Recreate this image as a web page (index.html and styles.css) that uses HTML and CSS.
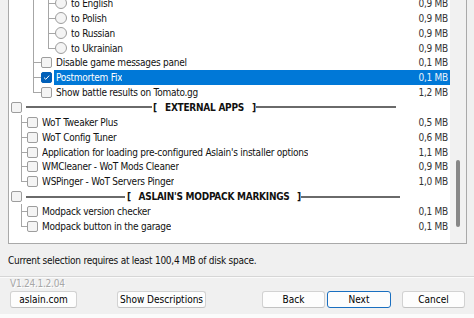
FILE: index.html
```html
<!DOCTYPE html>
<html lang="en">
  <head>
    <meta charset="UTF-8" />
    <title>Select Components</title>
    <link rel="stylesheet" href="styles.css">
  </head>
  <body>
    <div class="list">
      <div class="rows">
        <div class="rows-inner">
          <div class="row"><span class="sp w24"></span><span class="vl w15"></span><span class="el w7"></span><span class="radio"></span><span class="item"><span>to English</span><span class="size">0,9 MB</span></span></div>
          <div class="row"><span class="sp w24"></span><span class="vl w15"></span><span class="el w7"></span><span class="radio"></span><span class="item"><span>to Polish</span><span class="size">0,9 MB</span></span></div>
          <div class="row"><span class="sp w24"></span><span class="vl w15"></span><span class="el w7"></span><span class="radio"></span><span class="item"><span>to Russian</span><span class="size">0,9 MB</span></span></div>
          <div class="row"><span class="sp w24"></span><span class="vl w15"></span><span class="el last w7"></span><span class="radio"></span><span class="item"><span>to Ukrainian</span><span class="size">0,9 MB</span></span></div>
          <div class="row"><span class="sp w24"></span><span class="el w8"></span><span class="check"></span><span class="item"><span>Disable game messages panel</span><span class="size">0,1 MB</span></span></div>
          <div class="row"><span class="sp w24"></span><span class="el w8"></span><span class="check on"><svg viewBox="0 0 11 11" width="11" height="11"><path d="M3 5.6 L4.8 7.3 L8.2 3.6" fill="none" stroke="#fff" stroke-width="1"/></svg></span><span class="item selected"><span>Postmortem Fix</span><span class="size">0,1 MB</span></span></div>
          <div class="row"><span class="sp w24"></span><span class="el last w8"></span><span class="check"></span><span class="item"><span>Show battle results on Tomato.gg</span><span class="size">1,2 MB</span></span></div>

          <div class="row"><span class="sp w2"></span><span class="check"></span>
            <div class="hdr ext"><span class="hl left"></span><b>[</b><b class="ht">EXTERNAL APPS</b><b>]</b><span class="hl right"></span></div>
          </div>
          <div class="row"><span class="sp w12"></span><span class="el w6"></span><span class="check"></span><span class="item"><span>WoT Tweaker Plus</span><span class="size">0,5 MB</span></span></div>
          <div class="row"><span class="sp w12"></span><span class="el w6"></span><span class="check"></span><span class="item"><span>WoT Config Tuner</span><span class="size">0,6 MB</span></span></div>
          <div class="row"><span class="sp w12"></span><span class="el w6"></span><span class="check"></span><span class="item"><span>Application for loading pre-configured Aslain's installer options</span><span class="size">1,1 MB</span></span></div>
          <div class="row"><span class="sp w12"></span><span class="el w6"></span><span class="check"></span><span class="item"><span>WMCleaner - WoT Mods Cleaner</span><span class="size">0,9 MB</span></span></div>
          <div class="row"><span class="sp w12"></span><span class="el last w6"></span><span class="check"></span><span class="item"><span>WSPinger - WoT Servers Pinger</span><span class="size">1,0 MB</span></span></div>

          <div class="row"><span class="sp w2"></span><span class="check"></span>
            <div class="hdr mark"><span class="hl left"></span><b>[</b><b class="ht">ASLAIN'S MODPACK MARKINGS</b><b>]</b><span class="hl right"></span></div>
          </div>
          <div class="row"><span class="sp w12"></span><span class="el w6"></span><span class="check"></span><span class="item"><span>Modpack version checker</span><span class="size">0,1 MB</span></span></div>
          <div class="row"><span class="sp w12"></span><span class="el last w6"></span><span class="check"></span><span class="item"><span>Modpack button in the garage</span><span class="size">0,1 MB</span></span></div>
        </div>
      </div>
      <div class="scrollbar"><div class="thumb"></div></div>
    </div>

    <p class="req">Current selection requires at least 100,4 MB of disk space.</p>

    <div class="bottom">
      <div class="ver">V1.24.1.2.04</div>
      <div class="buttons">
        <div class="group">
          <button class="btn site">aslain.com</button>
          <button class="btn desc">Show Descriptions</button>
        </div>
        <div class="group nav">
          <button class="btn">Back</button>
          <button class="btn primary">Next</button>
          <button class="btn cancel">Cancel</button>
        </div>
      </div>
    </div>
  </body>
</html>
```

FILE: styles.css
```css
/* Base */
* {
  box-sizing: border-box;
}
html {
  background: #fbfbfb;
}
body {
  margin: 0;
  height: 314px;
  overflow: hidden;
  background: #f0f0f0;
  color: #111;
  font-family: "DejaVu Sans Condensed", "DejaVu Sans", sans-serif;
  font-stretch: condensed;
  font-size: 10px;
  letter-spacing: -0.25px;
}

/* Component list */
.list {
  display: flex;
  height: 244px;
  margin: 0 7px 0 8px;
  background: #fff;
  border: 1px solid #a9a9a9;
  border-top: none;
}
.rows {
  flex: 1;
  overflow: hidden;
}
.rows-inner {
  margin-top: -4px;
}
.row {
  display: flex;
  height: 14.86px;
  white-space: nowrap;
}
.sp,
.vl,
.el {
  flex: none;
}
.w2 { width: 2px; }
.w6 { width: 6px; }
.w7 { width: 7px; }
.w8 { width: 8px; }
.w12 { width: 12px; }
.w15 { width: 15px; }
.w24 { width: 24px; }

/* tree guides */
.vl {
  background: linear-gradient(#a6a6a6, #a6a6a6) 0 0 / 1px 100% no-repeat;
}
.el {
  background:
    linear-gradient(#a6a6a6, #a6a6a6) 0 0 / 1px 100% no-repeat,
    linear-gradient(#a6a6a6, #a6a6a6) 0 50% / 100% 1px no-repeat;
}
.el.last {
  background-size: 1px 50%, 100% 1px;
}

/* controls */
.check,
.radio {
  flex: none;
  align-self: center;
  width: 11px;
  height: 11px;
  background: #f4f4f4;
  border: 1px solid #9d9d9d;
  border-radius: 2px;
}
.radio {
  width: 12px;
  height: 12px;
  border-radius: 50%;
}
.check.on {
  background: #005fb8;
  border-color: #005fb8;
}
.check svg {
  display: block;
  margin: -1px 0 0 -1px;
}

.item {
  flex: 1;
  display: flex;
  justify-content: space-between;
  align-items: center;
  min-width: 0;
  margin-left: 2px;
  padding: 0 2px;
}
.item > span:first-child {
  overflow: hidden;
}
.size {
  flex: none;
  padding-left: 8px;
  color: #333;
}
.item.selected {
  background: #0078d7;
  color: #fff;
}
.item.selected .size {
  color: #e8f2fb;
}

/* section headers */
.hdr {
  display: flex;
  align-items: center;
  margin-left: 4px;
  font-weight: bold;
}
.hl {
  height: 2px;
  background: #6a6a6a;
}
.hdr b {
  width: 4px;
}
.hdr .ht {
  text-align: center;
}
.ext .left { width: 126px; margin-right: 1px; }
.ext .ht { width: 95px; }
.ext .right { width: 140px; }
.mark .left { width: 99px; margin-right: 2px; }
.mark .ht { width: 166px; }
.mark .right { width: 99px; }

.scrollbar {
  flex: none;
  width: 16px;
  background: #f1f1f1;
  display: flex;
  justify-content: center;
}
.thumb {
  width: 4px;
  height: 67px;
  margin-top: 160px;
  background: #878787;
  border-radius: 2px;
}

/* Footer */
.req {
  margin: 10px 0 8px 8px;
  line-height: 14px;
}
.bottom {
  border-top: 1px solid #d6d6d6;
  box-shadow: inset 0 1px #fbfbfb;
}
.ver {
  margin: 2px 0 0 10px;
  line-height: 10px;
  color: #a7a7a7;
  text-shadow: 1px 1px #fff;
}
.buttons {
  display: flex;
  justify-content: space-between;
  margin: 2px 9px 0 10px;
}
.group {
  display: flex;
  gap: 40px;
}
.nav {
  gap: 2px;
}
.btn {
  height: 17px;
  width: 63px;
  padding: 0;
  font: inherit;
  color: #000;
  background: #fdfdfd;
  border: 1px solid #d2d2d2;
  border-bottom-color: #c2c2c2;
  border-radius: 3px;
}
.btn.site { width: 67px; }
.btn.desc { width: 89px; }
.btn.primary {
  width: 64px;
  border-color: #1a6fc0;
}
.btn.cancel {
  margin-left: 9px;
}
```
